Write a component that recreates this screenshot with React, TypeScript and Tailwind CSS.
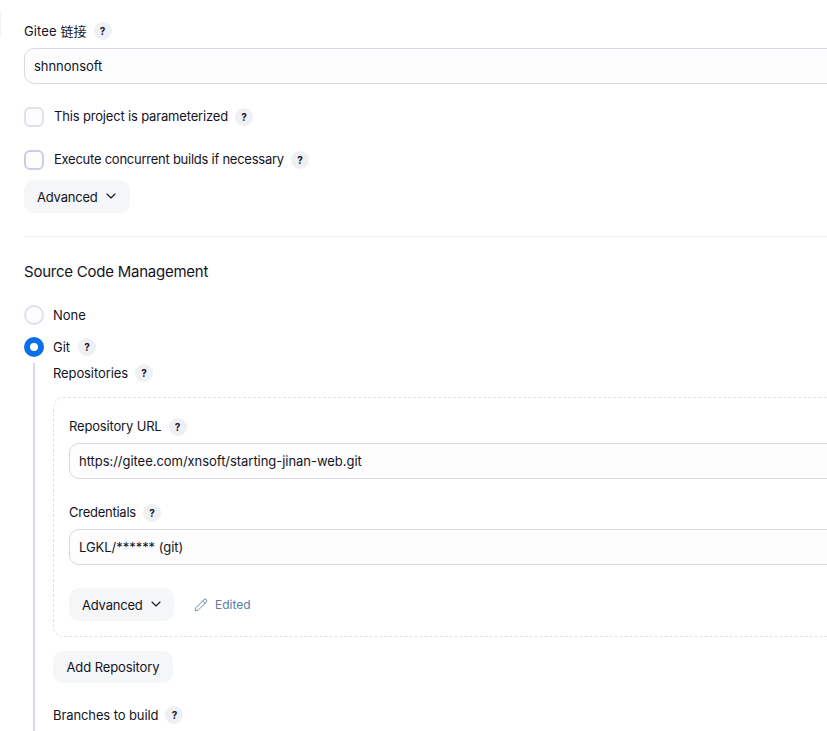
import { ChevronDown, Pencil } from 'lucide-react';

function Help() {
  return (
    <span className="ml-[7px] flex h-[18px] w-[18px] items-center justify-center rounded-full bg-[#eef0f4] text-[10px] font-bold text-[#14141f]">
      ?
    </span>
  );
}

function Label({ text, className, tracking, low }: { text: string; className?: string; tracking?: string; low?: boolean }) {
  return (
    <div className={`flex h-[20px] items-center text-[13px] text-[#14141f] ${tracking ?? 'tracking-[-0.17px]'} ${className ?? ''}`}>
      <span className={low ? 'translate-y-px' : ''}>{text}</span>
      <Help />
    </div>
  );
}

function TextInput({ value }: { value: string }) {
  return (
    <div className="flex h-[36px] items-center rounded-[10px] border border-[#d5d9e8] bg-[#fdfdfe] px-[9px] text-[13px] tracking-[-0.04px] text-[#14141f]">
      <span className="translate-y-px">{value}</span>
    </div>
  );
}

function Check({ text, dark, tracking }: { text: string; dark?: boolean; tracking?: string }) {
  return (
    <div className="flex h-[20px] items-center">
      <span
        className={`mr-[10px] h-[20px] w-[20px] rounded-[6px] border-2 bg-[#fdfdfe] ${dark ? 'border-[#c8cfe0]' : 'border-[#dde1ec]'}`}
      />
      <Label text={text} tracking={tracking} />
    </div>
  );
}

function Advanced({ className }: { className?: string }) {
  return (
    <button className={`flex h-[33px] items-center rounded-[10px] bg-[#f5f6f8] text-[13px] tracking-[-0.2px] text-[#14141f] ${className ?? ''}`}>
      <span className="translate-y-px">Advanced</span>
      <ChevronDown size={16} strokeWidth={1.6} className="ml-[5px] -translate-y-px" />
    </button>
  );
}

export default function App() {
  return (
    <div className="relative h-[731px] w-[827px] overflow-hidden bg-white font-['Inter','Noto_Sans_CJK_SC',sans-serif]">
      <div className="absolute left-0 top-[12px] h-[24px] w-px bg-[#f3f4f6]" />
      <div className="w-[900px] pl-[24px] pt-[21px]">
        <Label text="Gitee 链接" tracking="tracking-[0.1px]" low />
        <div className="mt-[7px]">
          <TextInput value="shnnonsoft" />
        </div>
        <div className="mt-[23px]">
          <Check text="This project is parameterized" />
        </div>
        <div className="mt-[23px]">
          <Check text="Execute concurrent builds if necessary" tracking="tracking-[-0.25px]" dark />
        </div>
        <Advanced className="mt-[10px] w-[106px] pl-[13px]" />
        <div className="mt-[23px] h-px bg-[#f0f1f4]" />

        <h2 className="mt-[25px] text-[15px] leading-[20px] font-normal tracking-[-0.24px] text-[#14141f]">Source Code Management</h2>

        <div className="mt-[23px] flex h-[20px] items-center text-[13px] text-[#14141f]">
          <span className="mr-[9px] h-[20px] w-[20px] rounded-full border-2 border-[#dde1ec] bg-[#fdfdfe]" />
          <span className="translate-y-px">None</span>
        </div>
        <div className="mt-[12px] flex h-[20px] items-center text-[13px] text-[#14141f]">
          <span className="mr-[9px] flex h-[20px] w-[20px] items-center justify-center rounded-full bg-[#0b6fe8]">
            <span className="h-[8px] w-[8px] rounded-full bg-white" />
          </span>
          <span className="mr-px translate-y-px">Git</span>
          <Help />
        </div>

        <div className="ml-[9px] mt-[6px] border-l-2 border-[#d5d9e8] pl-[18px]">
          <Label text="Repositories" tracking="tracking-[-0.1px]" low />
          <div className="mt-[14px] rounded-[10px] border border-dashed border-[#dfe2ea] px-[15px] pb-[15px] pt-[19px]">
            <Label text="Repository URL" />
            <div className="mt-[6px]">
              <TextInput value="https://gitee.com/xnsoft/starting-jinan-web.git" />
            </div>
            <Label text="Credentials" tracking="tracking-[-0.25px]" className="mt-[24px]" />
            <div className="mt-[6px]">
              <TextInput value="LGKL/****** (git)" />
            </div>
            <div className="mt-[23px] flex items-center">
              <Advanced className="w-[105px] pl-[13px]" />
              <Pencil size={14} strokeWidth={1.5} className="ml-[20px] text-[#5b7da8]" />
              <span className="ml-[7px] text-[12px] text-[#5b7da8]">Edited</span>
            </div>
          </div>
          <button className="mt-[14px] flex h-[32px] w-[120px] items-center justify-center rounded-[10px] bg-[#f5f6f8] text-[13px] tracking-[-0.1px] text-[#14141f]">
            <span className="translate-y-px">Add Repository</span>
          </button>
          <div className="pb-[20px] pt-[22px]">
            <Label text="Branches to build" tracking="tracking-[-0.1px]" low />
          </div>
        </div>
      </div>
    </div>
  );
}
